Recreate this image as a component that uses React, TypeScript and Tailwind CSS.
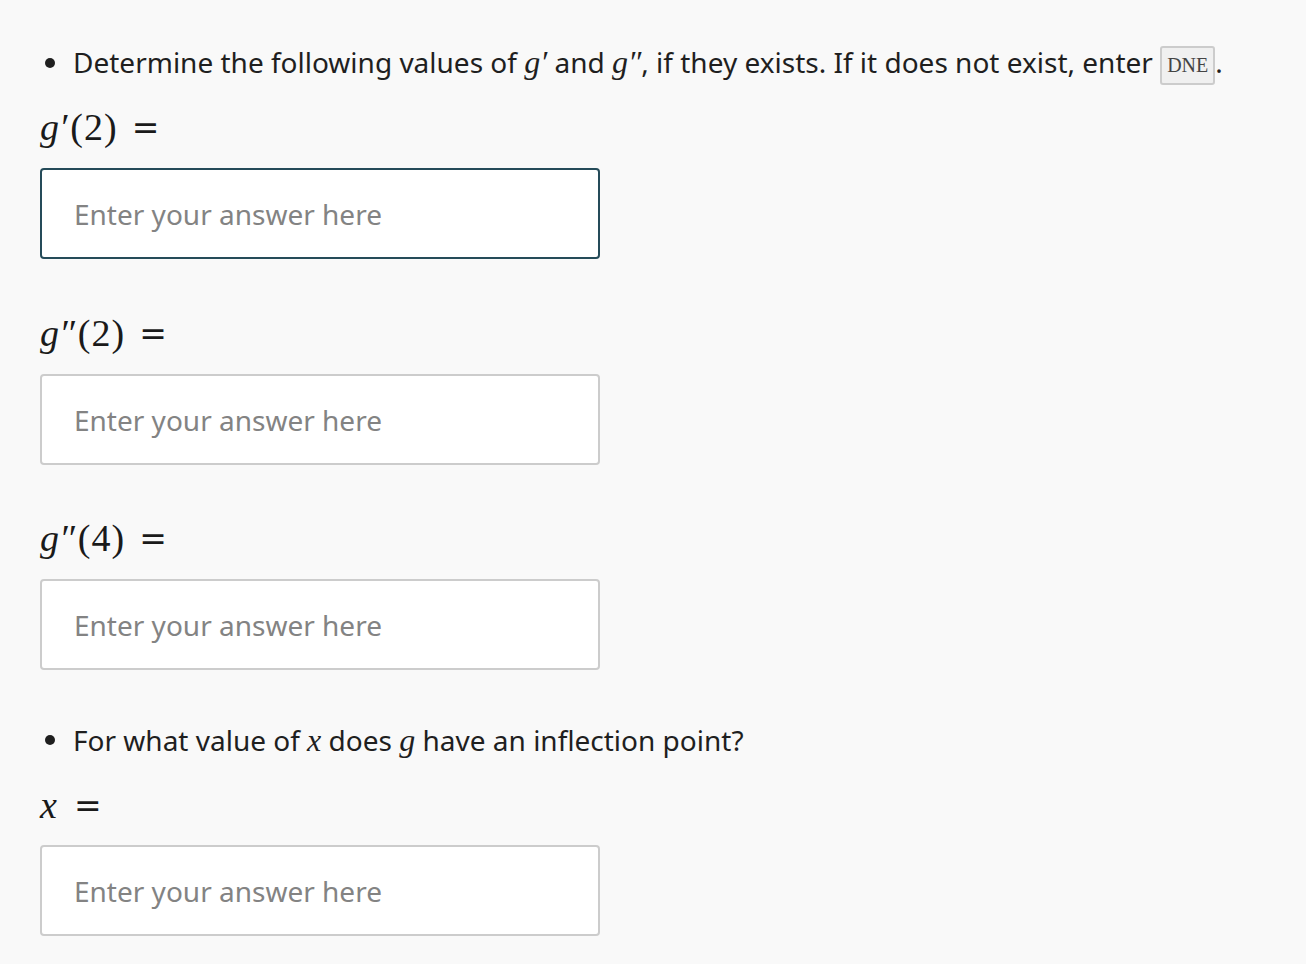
import React from "react";

const serif = '"Liberation Serif", "Times New Roman", serif';

const M = ({ children }: { children: React.ReactNode }) => (
  <span className="italic text-[32px] leading-none" style={{ fontFamily: serif }}>
    {children}
  </span>
);

const MathLabel = ({ fn, arg }: { fn: string; arg?: string }) => (
  <div
    className="h-[40px] flex items-center text-[38px] leading-none text-[#1a1a1a] whitespace-nowrap"
    style={{ fontFamily: serif }}
  >
    <span className="italic pr-[3px]">{fn}</span>
    {arg !== undefined && <span className="tracking-[1px]">({arg})</span>}
    <span
      className="ml-[14px] text-[33px]"
      style={{ fontFamily: '"DejaVu Serif", "Liberation Serif", serif', fontWeight: 300 }}
    >
      =
    </span>
  </div>
);

const Input = ({ focused }: { focused?: boolean }) => (
  <div
    className={`w-[560px] h-[91px] rounded-[4px] bg-white border-2 flex items-center pl-[32px] ${
      focused ? "border-[#254b59]" : "border-[#cccccc]"
    }`}
  >
    <span className="text-[28px] text-[#838383]">Enter your answer here</span>
  </div>
);

const Bullet = () => (
  <span className="w-[33px] flex items-center pl-[5px] shrink-0">
    <span className="block w-[10px] h-[10px] rounded-full bg-[#1f1f1f]" />
  </span>
);

export default function App() {
  return (
    <div
      className="min-h-[964px] w-[1306px] bg-[#f9f9f9] text-[#1f1f1f] pl-[40px]"
      style={{ fontFamily: '"Noto Sans", "Open Sans", sans-serif' }}
    >
      <div className="pt-[43px]">
        <div className="flex items-center h-[40px] text-[28px] whitespace-nowrap">
          <Bullet />
          <span>
            Determine the following values of <M>g′</M> and <M>g″</M>, if they exists. If it does not exist, enter{" "}
            <span
              className="inline-block align-middle border-2 border-[#cccccc] rounded-[3px] bg-[#f0f0f0] px-[5px] h-[39px] leading-[35px] text-[20px] text-[#444]"
              style={{ fontFamily: serif }}
            >
              DNE
            </span>
            .
          </span>
        </div>
      </div>

      <div className="mt-[24px]">
        <MathLabel fn="g′" arg="2" />
      </div>
      <div className="mt-[21px]">
        <Input focused />
      </div>

      <div className="mt-[54px]">
        <MathLabel fn="g″" arg="2" />
      </div>
      <div className="mt-[21px]">
        <Input />
      </div>

      <div className="mt-[53px]">
        <MathLabel fn="g″" arg="4" />
      </div>
      <div className="mt-[21px]">
        <Input />
      </div>

      <div className="mt-[50px] flex items-center h-[40px] text-[28px] whitespace-nowrap">
        <Bullet />
        <span>
          For what value of <M>x</M> does <M>g</M> have an inflection point?
        </span>
      </div>

      <div className="mt-[25px]">
        <MathLabel fn="x" />
      </div>
      <div className="mt-[20px]">
        <Input />
      </div>
    </div>
  );
}
